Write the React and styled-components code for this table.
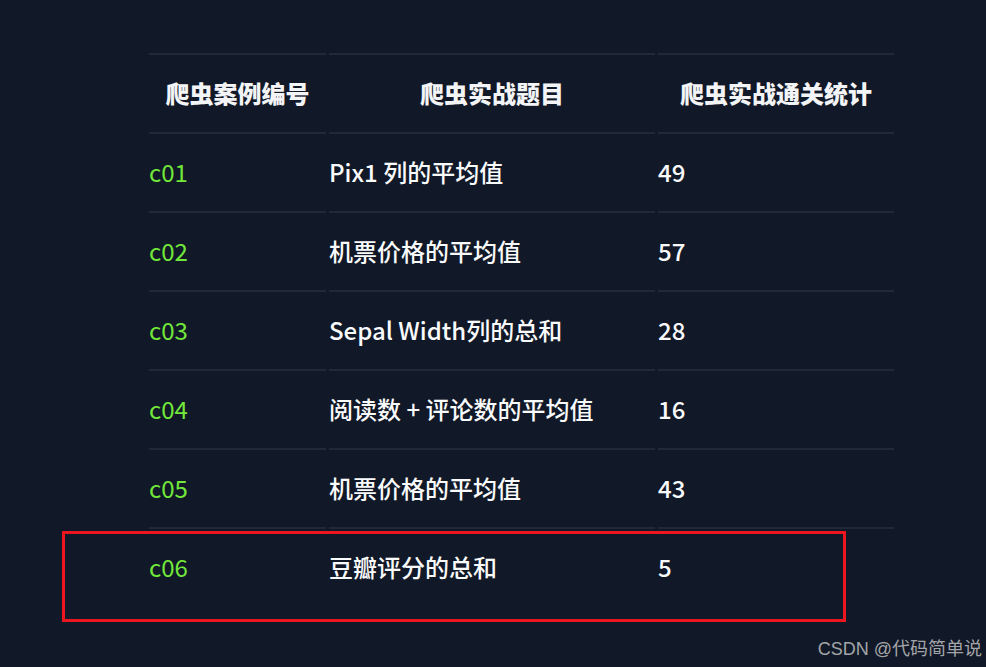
import styled, { createGlobalStyle } from "styled-components";

const GlobalStyle = createGlobalStyle`
  html, body {
    margin: 0;
    padding: 0;
    background-color: #111827;
  }
`;

const Page = styled.div`
  position: relative;
  width: 986px;
  height: 667px;
  background-color: #111827;
  font-family: "Noto Sans CJK SC", "Noto Sans", sans-serif;
  overflow: hidden;
`;

const TableWrap = styled.div`
  padding: 51px 0 0 146px;
`;

const Table = styled.table`
  border-collapse: separate;
  border-spacing: 3px 2px;
`;

const HeadCell = styled.th`
  width: ${(p) => p.$w}px;
  height: 74px;
  padding: 0 0 1px;
  border-top: 2px solid #1f2937;
  color: #f3f4f6;
  font-size: 24px;
  font-weight: 900;
  text-align: center;
  vertical-align: middle;
`;

const Cell = styled.td`
  height: 74px;
  padding: 0 0 1px;
  border-top: 2px solid #1f2937;
  color: ${(p) => (p.$code ? "#72e83a" : "#f9fafb")};
  font-size: 24px;
  font-weight: ${(p) => (p.$code ? 400 : 500)};
  text-align: left;
  vertical-align: middle;
`;

const Highlight = styled.div`
  position: absolute;
  left: 62px;
  top: 531px;
  width: 778px;
  height: 85px;
  border: 3px solid #ec1620;
`;

const Watermark = styled.div`
  position: absolute;
  right: 4px;
  bottom: 7px;
  color: #a3a5a8;
  font-family: "Liberation Sans", "Noto Sans CJK SC", sans-serif;
  font-size: 18px;
`;

const rows = [
  { code: "c01", title: "Pix1 列的平均值", count: 49 },
  { code: "c02", title: "机票价格的平均值", count: 57 },
  { code: "c03", title: "Sepal Width列的总和", count: 28 },
  { code: "c04", title: "阅读数 + 评论数的平均值", count: 16 },
  { code: "c05", title: "机票价格的平均值", count: 43 },
  { code: "c06", title: "豆瓣评分的总和", count: 5 },
];

export default function App() {
  return (
    <Page>
      <GlobalStyle />
      <TableWrap>
        <Table>
          <thead>
            <tr>
              <HeadCell $w={177}>爬虫案例编号</HeadCell>
              <HeadCell $w={326}>爬虫实战题目</HeadCell>
              <HeadCell $w={236}>爬虫实战通关统计</HeadCell>
            </tr>
          </thead>
          <tbody>
            {rows.map((r) => (
              <tr key={r.code}>
                <Cell $code>{r.code}</Cell>
                <Cell>{r.title}</Cell>
                <Cell>{r.count}</Cell>
              </tr>
            ))}
          </tbody>
        </Table>
      </TableWrap>
      <Highlight />
      <Watermark>CSDN @代码简单说</Watermark>
    </Page>
  );
}
